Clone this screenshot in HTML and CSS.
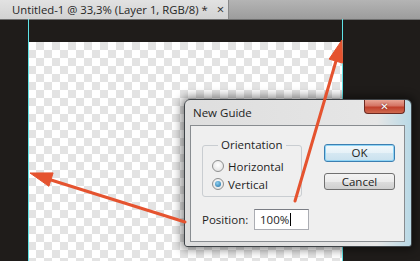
FILE: index.html
```html
<!DOCTYPE html>
<html>
<head>
<meta charset="utf-8">
<link rel="stylesheet" href="styles.css">
</head>
<body>
<div class="app">
  <div class="tabbar">
    <div class="tab">
      <span class="tab-title">Untitled-1 @ 33,3% (Layer 1, RGB/8) *</span>
      <span class="tab-close">×</span>
    </div>
  </div>
  <div class="workspace">
    <div class="canvas"></div>
  </div>
  <div class="guide guide-left"></div>
  <div class="guide guide-right"></div>

  <div class="dialog">
    <div class="titlebar">
      <span class="title">New Guide</span>
      <span class="close-btn">✕</span>
    </div>
    <div class="client">
      <div class="top-row">
        <fieldset class="group">
          <legend>Orientation</legend>
          <label class="radio"><span class="radio-dot"></span>Horizontal</label>
          <label class="radio"><span class="radio-dot checked"></span>Vertical</label>
        </fieldset>
        <div class="buttons">
          <div class="btn btn-default">OK</div>
          <div class="btn btn-cancel">Cancel</div>
        </div>
      </div>
      <div class="pos-row">
        <span class="pos-label">Position:</span>
        <div class="pos-input">100%<span class="caret"></span></div>
      </div>
    </div>
  </div>

  <svg class="arrows" width="420" height="261" viewBox="0 0 420 261">
    <g fill="#e5532f" stroke="#e5532f">
      <line x1="295" y1="201" x2="336" y2="61" stroke-width="3" stroke-linecap="round"/>
      <polygon points="342,40 342.5,63.1 329.1,59.1" stroke-width="1" stroke-linejoin="round"/>
      <line x1="185" y1="222" x2="51" y2="180" stroke-width="3" stroke-linecap="round"/>
      <polygon points="30,173 53.1,172.9 48.9,186.3" stroke-width="1" stroke-linejoin="round"/>
    </g>
  </svg>
</div>
</body>
</html>
```

FILE: styles.css
```css
* { box-sizing: border-box; }
html, body { margin: 0; padding: 0; }
body {
  width: 420px;
  height: 261px;
  overflow: hidden;
  font-family: "Open Sans", "DejaVu Sans", sans-serif;
}
.app {
  position: relative;
  width: 420px;
  height: 261px;
  display: flex;
  flex-direction: column;
  background: #1f1c1a;
}
.tabbar {
  height: 20px;
  flex: none;
  display: flex;
  background: linear-gradient(#b4b4b4, #9c9c9c);
  border-bottom: 1px solid #6e6e6e;
}
.tab {
  width: 229px;
  display: flex;
  align-items: center;
  padding-left: 12px;
  background: linear-gradient(#e2e2e2, #d2d2d2);
  border-right: 1px solid #8a8a8a;
}
.tab-title {
  font-size: 11.3px;
  color: #262626;
  white-space: nowrap;
}
.tab-close {
  margin-left: 9px;
  font-size: 13px;
  color: #303030;
  line-height: 1;
}
.workspace {
  flex: 1;
  padding: 22px 0 0 28px;
  display: flex;
}
.canvas {
  width: 315px;
  height: 100%;
  background: repeating-conic-gradient(#e3e3e3 0 25%, #ffffff 0 50%) 0 0 / 16px 16px;
}
.guide {
  position: absolute;
  top: 19px;
  bottom: 0;
  width: 1px;
  background: #5fe3e6;
}
.guide-left { left: 28px; }
.guide-right { left: 342px; }

.dialog {
  position: absolute;
  left: 184px;
  top: 99px;
  width: 228px;
  height: 148px;
  border: 1px solid #3f4448;
  border-radius: 6px 6px 3px 3px;
  background: linear-gradient(90deg, #dedede 0, #e6e6e6 85%, #b9d9e6 100%);
  box-shadow: 0 0 8px 3px rgba(0,0,0,0.45);
  display: flex;
  flex-direction: column;
}
.titlebar {
  height: 25px;
  flex: none;
  display: flex;
  align-items: flex-start;
  justify-content: space-between;
  padding-left: 8px;
  padding-right: 6px;
}
.title {
  font-size: 11.5px;
  color: #1e1e1e;
  margin-top: 5px;
}
.close-btn {
  width: 41px;
  height: 14px;
  border: 1px solid #6b2a22;
  border-top: none;
  border-radius: 0 0 4px 4px;
  background: linear-gradient(#e8a595 0, #d47363 45%, #c0402c 55%, #cf6a50 100%);
  color: #fff;
  font-size: 10px;
  font-weight: bold;
  line-height: 13px;
  text-align: center;
  text-shadow: 0 0 2px #5a1a10;
}
.client {
  flex: 1;
  margin: 0 6px 4px 5px;
  border: 1px solid #888c90;
  background: #efefef;
  padding: 13px 0 0 11px;
  display: flex;
  flex-direction: column;
}
.top-row {
  display: flex;
  align-items: flex-start;
}
.group {
  margin: 0;
  width: 100px;
  height: 58px;
  padding: 6px 0 0 9px;
  border: 1px solid #c9cdd1;
  border-radius: 3px;
}
.group legend {
  padding: 0 3px;
  margin-left: 6px;
  font-size: 11.5px;
  line-height: 12px;
  color: #1e1e1e;
}
.radio {
  display: flex;
  align-items: center;
  height: 18px;
  font-size: 11.5px;
  color: #1e1e1e;
}
.radio-dot {
  width: 12px;
  height: 12px;
  border-radius: 50%;
  border: 1px solid #8e8f8f;
  background: radial-gradient(circle at 50% 40%, #ffffff, #dcdcdc);
  margin-right: 4px;
  display: flex;
  align-items: center;
  justify-content: center;
}
.radio-dot.checked::after {
  content: "";
  width: 6px;
  height: 6px;
  border-radius: 50%;
  background: radial-gradient(circle at 40% 35%, #8fd0f0, #1c6ea4);
}
.buttons {
  margin-left: 22px;
  margin-top: 5px;
  display: flex;
  flex-direction: column;
  gap: 11px;
}
.btn {
  width: 71px;
  height: 18px;
  border: 1px solid #707070;
  border-radius: 3px;
  background: linear-gradient(#f3f3f3 0, #ebebeb 50%, #dddddd 51%, #cfcfcf 100%);
  font-size: 11.5px;
  color: #1e1e1e;
  text-align: center;
  line-height: 16px;
}
.btn-cancel {
  height: 17px;
  line-height: 15px;
}
.btn-default {
  border-color: #3c7fb1;
  box-shadow: inset 0 0 0 1px #8fd4f5;
  background: linear-gradient(#f2f8fb 0, #e6f1f7 50%, #d6e8f2 51%, #c9e1ee 100%);
}
.pos-row {
  display: flex;
  align-items: center;
  margin-top: 12px;
}
.pos-label {
  font-size: 11.5px;
  color: #1e1e1e;
  width: 52px;
}
.pos-input {
  width: 55px;
  height: 21px;
  background: #fff;
  border: 1px solid #abadb3;
  border-top-color: #7a7d84;
  font-size: 11.5px;
  color: #1e1e1e;
  padding-left: 5px;
  display: flex;
  align-items: center;
}
.caret {
  width: 1px;
  height: 13px;
  background: #000;
  margin-left: 1px;
}
.arrows {
  position: absolute;
  left: 0;
  top: 0;
}
```
